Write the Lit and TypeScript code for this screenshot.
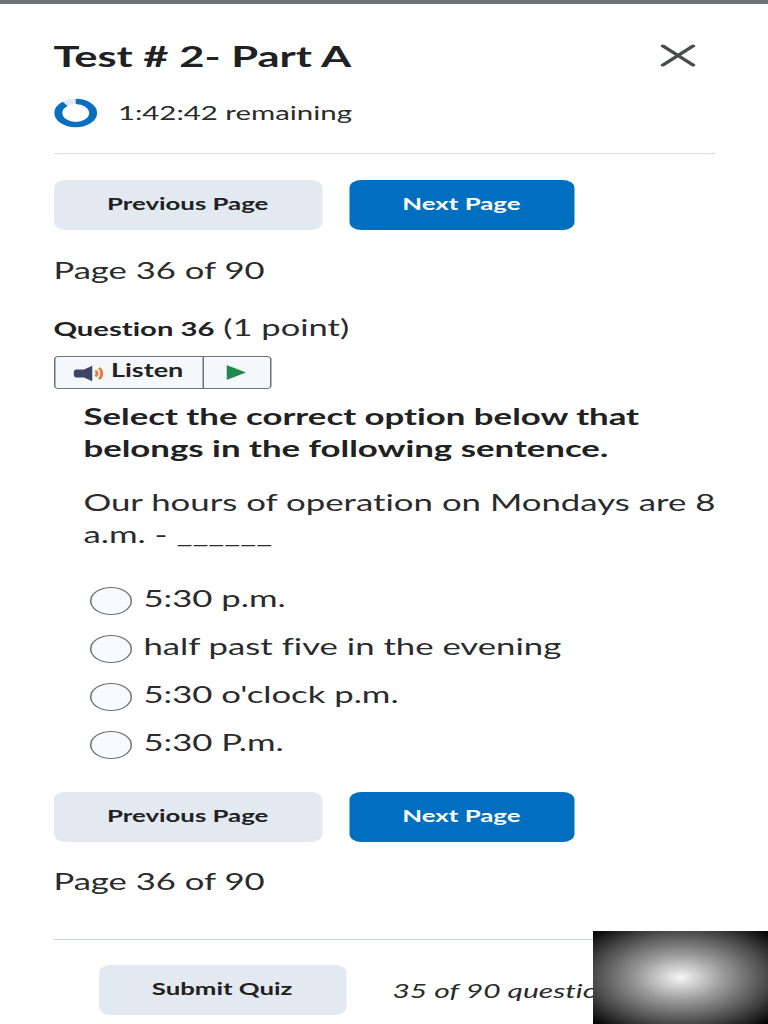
import { LitElement, html, css } from "lit";
import { customElement } from "lit/decorators.js";

@customElement("app-root")
export class AppRoot extends LitElement {
  static styles = css`
    :host { display: block; position: relative; width: 768px; height: 1024px; overflow: hidden; background: #fff; }
    .stretch { width: 512px; height: 1024px; transform: scale(1.5, 1); transform-origin: 0 0; font-family: Lato, "Liberation Sans", sans-serif; font-variant-ligatures: none; color: #202122; box-sizing: border-box; }
    .top { height: 4px; background: #6e7377; }
    .content { padding: 0 35.6px; display: flex; flex-direction: column; }
    .head { display: flex; align-items: center; justify-content: space-between; margin-top: 32px; height: 40px; }
    h1 { margin: 0; font-size: 29px; font-weight: 700; line-height: 40px; }
    .close { width: 24px; height: 24px; margin-right: 12px; display: block; }
    .timer { display: flex; align-items: center; gap: 14px; margin-top: 20px; height: 32px; font-size: 19.6px; color: #2a2b2c; }
    .ring { width: 29px; height: 30px; display: block; margin-top: 2px; }
    .rule { height: 1px; background: #d8dde3; margin-top: 25px; width: 441px; }
    .btns { display: flex; gap: 18px; }
    .btn { height: 50px; border-radius: 8px; font: 700 17.2px Lato, sans-serif; font-variant-ligatures: none; border: none; display: flex; align-items: center; justify-content: center; padding: 0 0 3px; color: #202122; background: #e3e9f1; flex: none; white-space: nowrap; }
    .prev { width: 179px; }
    .next { width: 150px; background: #006fbf; color: #fff; }
    .b1 { margin-top: 26px; }
    .page { font-size: 23.1px; line-height: 32px; margin-top: 24px; color: #2a2b2c; }
    .q { font-size: 23px; line-height: 30px; margin-top: 26px; color: #2a2b2c; }
    .q b { font-size: 19.5px; color: #202122; }
    .listen { display: flex; width: 145px; height: 33px; margin-top: 12px; border: 1.5px solid #6e7377; border-radius: 3px; background: #f4f8fb; box-sizing: border-box; }
    .l1 { width: 99px; display: flex; align-items: center; justify-content: center; gap: 3px; font-size: 18px; font-weight: 700; border-right: 1.5px solid #6e7377; box-sizing: border-box; padding-bottom: 6px; }
    .l1 svg { margin-top: 7px; }
    .l2 { flex: 1; display: flex; align-items: center; justify-content: center; }
    .body { margin-left: 20px; margin-top: 11px; }
    .body p { margin: 0; font-size: 23.2px; line-height: 32px; white-space: nowrap; }
    .body p.strong { font-weight: 700; }
    .body p + p { margin-top: 22px; color: #2a2b2c; }
    .opts { display: flex; flex-direction: column; gap: 20px; margin-top: 37px; margin-left: 24px; color: #2a2b2c; }
    .opt { display: flex; gap: 8px; height: 28px; font-size: 23.15px; line-height: 22px; }
    .radio { width: 28px; height: 28px; border: 1.5px solid #6e7377; border-radius: 50%; background: #f8fafd; box-sizing: border-box; flex: none; }
    .b2 { margin-top: 33px; }
    .b2 + .page { margin-top: 23px; }
    .rule2 { height: 1px; background: #cdd2d8; margin-top: 42px; width: 441px; }
    .foot { display: flex; align-items: center; margin-top: 25px; margin-left: 30px; }
    .submit { width: 165px; }
    .count { font-size: 20px; font-style: italic; margin-left: 31px; white-space: nowrap; color: #2a2b2c; }
    .overlay { position: absolute; left: 593px; top: 931px; width: 175px; height: 93px; background: radial-gradient(farthest-corner at 50% 50%, #f6f6f6 0%, #9a9a9a 35%, #4a4a4a 70%, #000 100%); }
  `;

  private buttons(cls: string) {
    return html`<div class="btns ${cls}">
      <button class="btn prev">Previous Page</button>
      <button class="btn next">Next Page</button>
    </div>`;
  }

  render() {
    return html`
      <div class="stretch">
        <div class="top"></div>
        <div class="content">
          <div class="head">
            <h1>Test # 2- Part A</h1>
            <svg class="close" viewBox="0 0 24 24"><path d="M2 2 22 21M22 2 2 21" stroke="#494c4f" stroke-width="3" stroke-linecap="round" fill="none"/></svg>
          </div>
          <div class="timer">
            <svg class="ring" viewBox="0 0 30 30">
              <circle cx="15" cy="15" r="12" fill="none" stroke="#e3e9f1" stroke-width="5.5"/>
              <circle cx="15" cy="15" r="12" fill="none" stroke="#0a70bd" stroke-width="5.5" stroke-dasharray="68 8" transform="rotate(-90 15 15)" pathLength="76"/>
            </svg>
            <span>1:42:42 remaining</span>
          </div>
          <div class="rule"></div>
          ${this.buttons("b1")}
          <div class="page">Page 36 of 90</div>
          <div class="q"><b>Question 36</b> (1 point)</div>
          <div class="listen">
            <div class="l1">
              <svg width="22" height="17" viewBox="0 0 22 17">
                <path d="M2 4.5H7L12.5 .8V16.2L7 12.5H2Q0 12.5 0 8.5T2 4.5Z" fill="#3d4464"/>
                <path d="M14.8 5.5Q16.6 8.5 14.8 11.5M17.2 2.8Q20.6 8.5 17.2 14.2" fill="none" stroke="#ee7a3b" stroke-width="2"/>
              </svg>
              <span>Listen</span>
            </div>
            <div class="l2"><svg width="13" height="15" viewBox="0 0 13 15"><path d="M0 0 13 7.5 0 15Z" fill="#1f8a4c"/></svg></div>
          </div>
          <div class="body">
            <p class="strong">Select the correct option below that<br />belongs in the following sentence.</p>
            <p>Our hours of operation on Mondays are 8<br />a.m. - ______</p>
          </div>
          <div class="opts">
            <div class="opt"><span class="radio"></span><span>5:30 p.m.</span></div>
            <div class="opt"><span class="radio"></span><span>half past five in the evening</span></div>
            <div class="opt"><span class="radio"></span><span>5:30 o'clock p.m.</span></div>
            <div class="opt"><span class="radio"></span><span>5:30 P.m.</span></div>
          </div>
          ${this.buttons("b2")}
          <div class="page">Page 36 of 90</div>
          <div class="rule2"></div>
          <div class="foot">
            <button class="btn submit">Submit Quiz</button>
            <span class="count">35 of 90 questions answered</span>
          </div>
        </div>
      </div>
      <div class="overlay"></div>
    `;
  }
}
